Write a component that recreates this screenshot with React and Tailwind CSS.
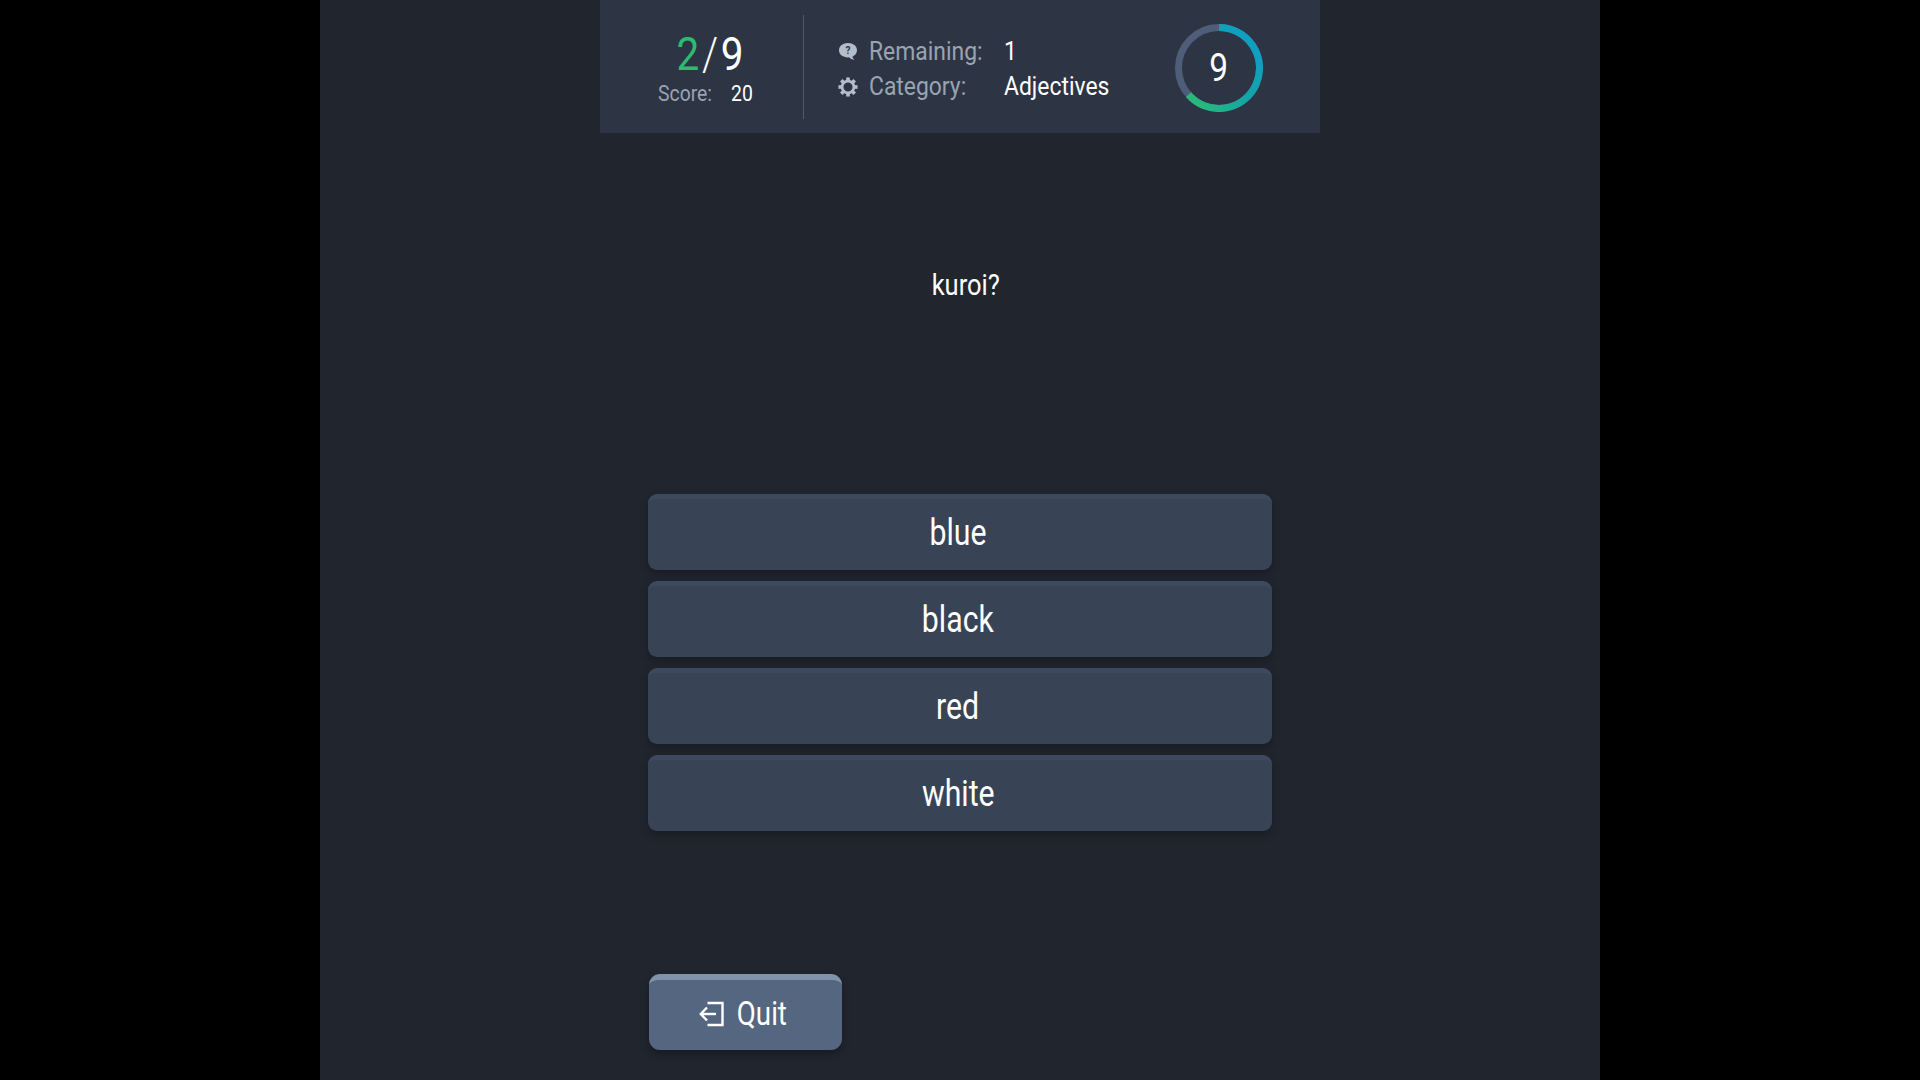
import { useId } from 'react';

const answers = ['blue', 'black', 'red', 'white'];

// Roboto squeezed to the condensed look of the original
function Cond({ className = '', squeeze = 'scale-x-[0.88]', children }) {
  return <span className={`inline-block whitespace-nowrap ${squeeze} ${className}`}>{children}</span>;
}

function Timer({ value }) {
  const id = useId();
  return (
    <div className="relative w-[88px] h-[88px] flex items-center justify-center">
      <svg viewBox="0 0 88 88" className="absolute inset-0 w-full h-full">
        <defs>
          <linearGradient id={id} gradientUnits="userSpaceOnUse" x1="84" y1="34" x2="26" y2="84">
            <stop offset="0" stopColor="#0f9fc0" />
            <stop offset="0.45" stopColor="#12a5a6" />
            <stop offset="1" stopColor="#27b97c" />
          </linearGradient>
        </defs>
        <circle cx="44" cy="44" r="40.5" fill="none" stroke="#4f5e78" strokeWidth="7" />
        <path d="M44 3.5 A40.5 40.5 0 1 1 13.5 70.6" fill="none" stroke={`url(#${id})`} strokeWidth="7" />
      </svg>
      <Cond className="text-[38px] leading-none text-white">{value}</Cond>
    </div>
  );
}

function QuestionIcon() {
  return (
    <svg viewBox="0 0 20 20" className="w-5 h-5 text-[#b4bdcc]" fill="currentColor">
      <path d="M10 1c5 0 9 3 9 7.3 0 3-2 5.3-4.6 6.4.3 1.2 1.3 2.3 2.2 3-2.3 0-4.4-1-5.6-2.4-.4 0-.7.1-1 .1-5 0-9-2.700-9-7.100C1 4 5 1 10 1z" />
      <text x="10" y="12" textAnchor="middle" fontSize="10" fontWeight="700" fill="#2d3544" fontFamily="Roboto, sans-serif">?</text>
    </svg>
  );
}

function GearIcon() {
  return (
    <svg viewBox="1 1 22 22" className="w-5 h-5 text-[#b4bdcc]" fill="none" stroke="currentColor">
      <circle cx="12" cy="12" r="6.500" strokeWidth="3" />
      <g strokeWidth="4">
        <path d="M12 1.500v4" />
        <path d="M12 18.500v4" />
        <path d="M1.500 12h4" />
        <path d="M18.500 12h4" />
        <path d="M4.600 4.600l2.800 2.800" />
        <path d="M16.600 16.600l2.800 2.800" />
        <path d="M19.400 4.600l-2.800 2.800" />
        <path d="M7.400 16.600l-2.800 2.800" />
      </g>
    </svg>
  );
}

function QuitIcon() {
  return (
    <svg viewBox="0 0 26 26" className="w-[26px] h-[26px] text-white" fill="none" stroke="currentColor" strokeWidth="2.400">
      <path d="M8.500 2h15v22h-15" />
      <path d="M17 13H2" />
      <path d="M8 6.500L1.800 13 8 19.500" />
    </svg>
  );
}

export default function App() {
  return (
    <div className="min-h-screen bg-black flex justify-center font-['Roboto',sans-serif]">
      <div className="w-[1280px] h-[1080px] bg-[#21252e] flex flex-col items-center">
        {/* Top stats */}
        <header className="w-[720px] h-[133px] bg-[#2d3544] flex items-center shrink-0">
          <div className="w-[204px] h-[104px] border-r border-[#515a6b] flex flex-col items-center justify-center pt-[5px]">
            <div className="h-[50px] flex items-center pl-[18px]">
              <Cond className="text-[46px] leading-none text-white">
                <span className="text-[#2dbb74]">2</span>
                <span className="mx-[3px] font-light">/</span>
                <span>9</span>
              </Cond>
            </div>
            <div className="flex items-center text-[22px] leading-[30px] ml-[11px]">
              <div className="w-[73px]"><Cond className="text-[#9aa3b2] origin-left">Score:</Cond></div>
              <Cond className="text-white origin-left">20</Cond>
            </div>
          </div>

          <div className="w-[336px] pl-[34px] pt-[5px] box-content flex flex-col text-[26px] leading-[35px]">
            <div className="flex items-center">
              <QuestionIcon />
              <div className="w-[135px] ml-[11px]"><Cond className="text-[#9aa3b2] origin-left">Remaining:</Cond></div>
              <Cond className="text-white origin-left">1</Cond>
            </div>
            <div className="flex items-center">
              <GearIcon />
              <div className="w-[135px] ml-[11px]"><Cond className="text-[#9aa3b2] origin-left">Category:</Cond></div>
              <Cond className="text-white origin-left">Adjectives</Cond>
            </div>
          </div>

          <div className="mt-[2px] ml-[1px]">
            <Timer value={9} />
          </div>
        </header>

        {/* Question */}
        <div className="h-[361px] w-full flex justify-center pt-[134px] pl-[12px] shrink-0">
          <Cond className="text-[29px] leading-[36px] text-white h-[36px]">kuroi?</Cond>
        </div>

        {/* Answers */}
        <div className="w-[624px] flex flex-col gap-[11px]">
          {answers.map((a) => (
            <button
              key={a}
              className="h-[76px] rounded-[9px] bg-[#384456] border-t-[5px] border-[#3c495e] shadow-[0_4px_8px_rgba(0,0,0,0.25)] flex items-center justify-center pr-[4px] pb-[4px]"
            >
              <Cond squeeze="scale-x-[0.84]" className="text-[36px] leading-none text-white">{a}</Cond>
            </button>
          ))}
        </div>

        {/* Quit */}
        <div className="w-[624px] pt-[143px]">
          <button className="ml-[1px] w-[193px] h-[76px] rounded-[11px] bg-[#546680] border-t-[6px] border-[#7f93ab] shadow-[0_4px_8px_rgba(0,0,0,0.3)] flex items-center justify-center gap-[7px] pb-[3px] pr-[1px]">
            <QuitIcon />
            <Cond squeeze="scale-x-[0.84]" className="text-[33px] leading-none text-white">Quit</Cond>
          </button>
        </div>
      </div>
    </div>
  );
}
